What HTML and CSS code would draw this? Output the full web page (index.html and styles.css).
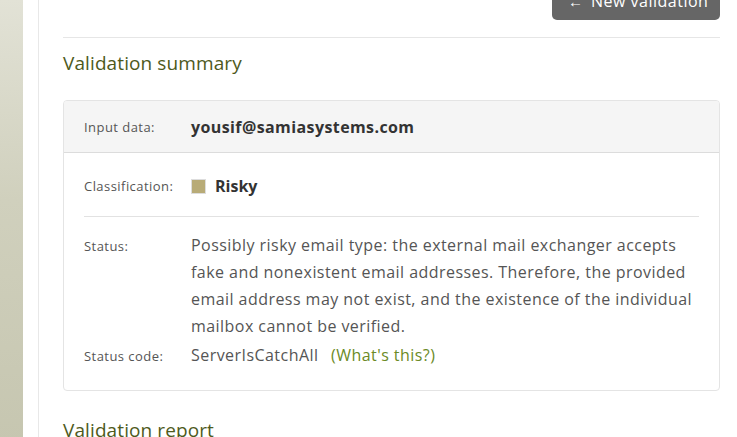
FILE: index.html
```html
<!DOCTYPE html>
<html lang="en">
<head>
<meta charset="utf-8">
<title>Validation summary</title>
<link rel="stylesheet" href="styles.css">
</head>
<body>
<div class="layout">
  <aside class="sidebar"></aside>
  <div class="gutter"></div>
  <main class="main">
    <div class="toolbar">
      <a class="btn-new" href="#"><span class="arrow">&#8592;</span> New validation</a>
    </div>
    <hr class="divider">
    <h2 class="section-title">Validation summary</h2>
    <section class="card">
      <div class="card-head">
        <span class="label">Input data:</span>
        <span class="email">yousif@samiasystems.com</span>
      </div>
      <div class="card-body">
        <div class="row class-row">
          <span class="label">Classification:</span>
          <span class="classification"><span class="swatch"></span><strong>Risky</strong></span>
        </div>
        <hr class="row-sep">
        <div class="row">
          <span class="label">Status:</span>
          <span class="value">Possibly risky email type: the external mail exchanger accepts fake and nonexistent email addresses. Therefore, the provided email address may not exist, and the existence of the individual mailbox cannot be verified.</span>
        </div>
        <div class="row code-row">
          <span class="label">Status code:</span>
          <span class="value">ServerIsCatchAll <a class="help" href="#">(What's this?)</a></span>
        </div>
      </div>
    </section>
    <h2 class="section-title report">Validation report</h2>
  </main>
</div>
</body>
</html>
```
FILE: styles.css
```css
html, body {
  margin: 0;
  padding: 0;
  background: #fff;
  overflow: hidden;
}
body {
  font-family: "Open Sans", "Noto Sans", sans-serif;
  color: #555;
}
.layout {
  display: flex;
  min-height: 437px;
}
.sidebar {
  width: 23px;
  flex: none;
  background: linear-gradient(180deg, #e2e2d6 0%, #d0d0bd 45%, #c6c6b0 100%);
}
.gutter {
  width: 15px;
  flex: none;
  border-right: 1px solid #e8e8e8;
}
.main {
  flex: 1;
  padding: 0 17px 0 24px;
  min-width: 0;
}
.toolbar {
  display: flex;
  justify-content: flex-end;
  margin-top: -18px;
}
.btn-new {
  display: inline-flex;
  align-items: center;
  gap: 8px;
  height: 38px;
  padding: 0 10px 0 16px;
  width: 168px;
  box-sizing: border-box;
  background: #666;
  color: #fff;
  border-radius: 0 0 5px 5px;
  font-size: 16px;
  letter-spacing: 0.5px;
  text-decoration: none;
}
.arrow { font-size: 15px; letter-spacing: 0; }
.divider {
  border: 0;
  border-top: 1px solid #e6e6e6;
  margin: 17px 0 0;
}
.section-title {
  margin: 12px 0 0;
  font-size: 19px;
  line-height: 27px;
  font-weight: 400;
  color: #4e5a1c;
  letter-spacing: 0.1px;
}
.card {
  margin-top: 23px;
  border: 1px solid #e4e4e4;
  border-radius: 4px;
  overflow: hidden;
}
.card-head {
  display: grid;
  grid-template-columns: 107px 1fr;
  align-items: center;
  height: 51px;
  padding: 0 20px;
  background: #f5f5f5;
  border-bottom: 1px solid #dcdcdc;
}
.label {
  font-size: 13px;
  letter-spacing: 0.45px;
  color: #555;
}
.email {
  font-size: 16px;
  font-weight: 700;
  letter-spacing: 0.4px;
  color: #333;
}
.card-body {
  padding: 21px 20px 20px;
}
.row {
  display: grid;
  grid-template-columns: 107px 1fr;
  align-items: baseline;
  line-height: 27px;
}
.class-row {
  align-items: center;
  line-height: 24px;
}
.code-row {
  margin-top: 2px;
}
.classification {
  display: flex;
  align-items: center;
  gap: 9px;
  font-size: 16px;
  color: #333;
}
.swatch {
  width: 13px;
  height: 13px;
  background: #b8ab77;
  border: 1px solid #ddd;
}
.row-sep {
  border: 0;
  border-top: 1px solid #e2e2e2;
  margin: 18px 0 15px;
}
.value {
  font-size: 16px;
  letter-spacing: 0.45px;
  color: #555;
}
.help {
  color: #6b8a25;
  text-decoration: none;
  margin-left: 8px;
}
.section-title.report {
  margin-top: 26px;
}
```
